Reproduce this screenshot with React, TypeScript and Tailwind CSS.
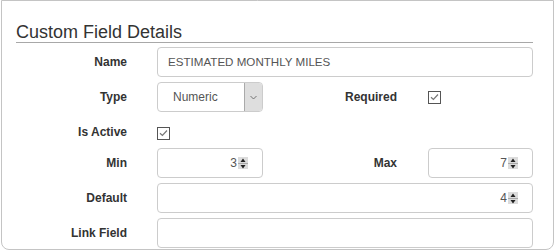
import React from "react";

const font = { fontFamily: '"Liberation Sans", Arial, sans-serif' };

const Label = ({ children }: { children: React.ReactNode }) => (
  <div className="pr-[30px] text-right text-[12px] font-bold text-[#333]">{children}</div>
);

const Label2 = ({ children }: { children: React.ReactNode }) => (
  <div className="pr-[31px] text-right text-[12px] font-bold text-[#333]">{children}</div>
);

const Check = () => (
  <div className="flex h-[13px] w-[13px] items-center justify-center border border-[#555] bg-white">
    <svg width="9" height="8" viewBox="0 0 9 8">
      <path d="M1 4.2 L3.4 6.5 L8 1.5" fill="none" stroke="#777" strokeWidth="1.2" />
    </svg>
  </div>
);

const Spinner = () => (
  <div className="ml-px flex h-[12px] w-[10px] flex-col items-center justify-center gap-[1px] bg-[#dcdcdc]">
    <svg width="6" height="4" viewBox="0 0 6 4">
      <path d="M0.5 4 L3 0.5 L5.5 4 Z" fill="#222" />
    </svg>
    <div className="h-px w-full bg-[#aaa]" />
    <svg width="6" height="4" viewBox="0 0 6 4">
      <path d="M0.5 0 L3 3.5 L5.5 0 Z" fill="#222" />
    </svg>
  </div>
);

const TextBox = ({ value }: { value?: string }) => (
  <div className="flex h-[30px] items-center rounded-[4px] border border-[#ccc] bg-white pl-[10px] text-[11.6px] text-[#555]">
    {value}
  </div>
);

const NumberBox = ({ value }: { value: string }) => (
  <div className="flex h-[30px] items-center justify-end rounded-[4px] border border-[#ccc] bg-white pr-[14px] text-[12px] text-[#555]">
    <span>{value}</span>
    <Spinner />
  </div>
);

export default function App() {
  return (
    <div className="bg-white" style={font}>
      <div className="ml-px h-[250px] w-[553px] rounded-b-[8px] border border-[#c4c4c4] pt-[21px] pl-[14px]">
        <div className="h-[21px] w-[517px] border-b border-[#a8a8a8] text-[18px] leading-[20px] text-[#333]">
          Custom Field Details
        </div>
        <div className="mt-[4px] grid w-[517px] grid-cols-[141px_106px_165px_105px] items-center gap-y-[5px]">
          <Label>Name</Label>
          <div className="col-span-3">
            <TextBox value="ESTIMATED MONTHLY MILES" />
          </div>

          <Label>Type</Label>
          <div className="flex h-[30px] items-stretch rounded-[4px] border border-[#ccc] bg-white text-[12px] text-[#555]">
            <div className="flex flex-1 items-center pl-[15px]">Numeric</div>
            <div className="flex w-[18px] items-center justify-center rounded-r-[3px] border-l border-[#aaa] bg-[#dedede]">
              <svg width="7" height="5" viewBox="0 0 7 5">
                <path d="M0.5 1 L3.5 4 L6.5 1" fill="none" stroke="#666" strokeWidth="0.9" />
              </svg>
            </div>
          </div>
          <Label2>Required</Label2>
          <div>
            <Check />
          </div>

          <div className="flex h-[26px] items-center justify-end pt-[3px] pr-[30px] text-[12px] font-bold text-[#333]">
            Is Active
          </div>
          <div className="col-span-3 flex h-[26px] items-center pt-[6px]">
            <Check />
          </div>

          <Label>Min</Label>
          <NumberBox value="3" />
          <Label2>Max</Label2>
          <NumberBox value="7" />

          <Label>Default</Label>
          <div className="col-span-3">
            <NumberBox value="4" />
          </div>

          <Label>Link Field</Label>
          <div className="col-span-3">
            <TextBox />
          </div>
        </div>
      </div>
    </div>
  );
}
